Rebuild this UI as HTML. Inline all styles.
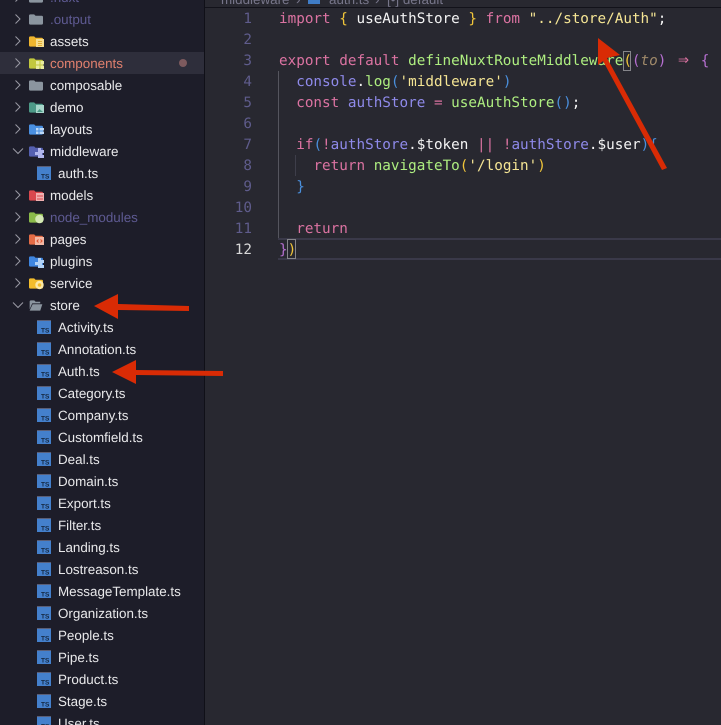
<!DOCTYPE html>
<html><head><meta charset="utf-8"><style>
html,body{margin:0;padding:0;background:#1d1d29;}
#p{position:relative;width:721px;height:725px;overflow:hidden;background:#1d1d29;font-family:"Liberation Sans",sans-serif;text-rendering:geometricPrecision;}
#side{position:absolute;left:0;top:0;width:204px;height:725px;background:#1d1d29;}
#ed{position:absolute;left:205px;top:0;width:516px;height:725px;background:#282830;}
#div{position:absolute;left:204px;top:0;width:1px;height:725px;background:#101018;}
.r{position:absolute;left:0;width:204px;height:22px;}
.r .t{position:absolute;top:0;line-height:22px;font-size:13.4px;color:#e8e8ea;white-space:nowrap;}
.r svg{position:absolute;}
.r svg.fd{left:29px;top:6px;width:14px;height:11px;}
.r svg.ch{left:13px;top:5px;width:10px;height:12px;}
.c{position:absolute;white-space:pre;font-family:"DejaVu Sans Mono",monospace;font-size:14.3px;line-height:21px;left:279px;color:#f4f4f4;margin-top:1px;}
.n{position:absolute;width:47px;left:205px;text-align:right;font-family:"DejaVu Sans Mono",monospace;font-size:14.3px;line-height:21px;color:#5f5c8c;margin-top:1px;}
.k{color:#dc73a2}.g{color:#aeee80}.y{color:#f0c53a}.s{color:#f5e594}.b{color:#4a8fdc}.v{color:#8f8aea}.m{color:#b66fd0}
.bc{position:absolute;top:-7px;font-size:13.4px;line-height:14px;color:#77768a;white-space:pre}
</style></head><body><div id="p">
<div id="side"></div><div id="ed"></div><div id="div"></div>
<div style="position:absolute;left:0;top:52px;width:204px;height:22px;background:#2e2e3b"></div>
<div style="position:absolute;left:205px;top:7px;width:516px;height:1px;background:#12121a"></div>
<div class="bc" style="left:221px">middleware</div>
<div class="bc" style="left:296px">›</div>
<div style="position:absolute;left:308px;top:-8px;width:12px;height:12px;background:#3f7cc6"></div>
<div class="bc" style="left:329px">auth.ts</div>
<div class="bc" style="left:375px">›</div>
<div class="bc" style="left:387px">[•] default</div>
<div style="position:absolute;left:179px;top:59px;width:8px;height:8px;border-radius:50%;background:#7d5a5e"></div>

<svg width="0" height="0" style="position:absolute">
<symbol id="cr" viewBox="0 0 10 12"><path d="M2.5 1.5L7 6L2.5 10.5" fill="none" stroke="#9a9aa4" stroke-width="1"/></symbol>
<symbol id="cd" viewBox="0 0 12 10"><path d="M1 2.5L6 7.5L11 2.5" fill="none" stroke="#9a9aa4" stroke-width="1"/></symbol>
<symbol id="fo" viewBox="0 0 15 13" preserveAspectRatio="none"><path d="M0 2Q0 .5 1.5 .5H5.5L7 2H13.5Q15 2 15 3.5V11Q15 12.5 13.5 12.5H1.5Q0 12.5 0 11Z"/></symbol>
<symbol id="ts" viewBox="0 0 14 14"><rect width="14" height="14" fill="#4480cc"/><rect x="0" y="0" width="14" height="1" fill="#5a5f78"/><text x="4" y="12.4" font-family="Liberation Sans" font-size="6.5" font-weight="bold" fill="#14263e">TS</text></symbol>
</svg>

<!-- folder rows -->
<div class="r" style="top:-14px"><svg class="ch"><use href="#cr"/></svg><svg class="fd" style="fill:#8b959f"><use href="#fo"/></svg><span class="t" style="left:50px;color:#5e5a92;top:1px">.nuxt</span></div>
<div class="r" style="top:8px"><svg class="ch"><use href="#cr"/></svg><svg class="fd" style="fill:#8b959f"><use href="#fo"/></svg><span class="t" style="left:50px;color:#5e5a92;top:1px">.output</span></div>
<div class="r" style="top:30px"><svg class="ch"><use href="#cr"/></svg><svg class="fd" style="fill:#efb52e"><use href="#fo"/></svg><svg style="left:36px;top:9px" width="8" height="8"><rect width="8" height="8" fill="#f6dd8f"/><path d="M2 2.5H6M2 4.5H6M2 6.5H6" stroke="#e2ae33"/></svg><span class="t" style="left:50px;top:1px">assets</span></div>
<div class="r" style="top:52px"><svg class="ch"><use href="#cr"/></svg><svg class="fd" style="fill:#c2c83e"><use href="#fo"/></svg><svg style="left:36px;top:9px" width="8" height="8"><path d="M0 0H3.500V3.500H0ZM4.500 0H8V3.500H4.500ZM0 4.500H3.500V8H0ZM4.500 4.500H8V8H4.500Z" fill="#e8eca0"/></svg><span class="t" style="left:50px;color:#e0806e;top:1px">components</span></div>
<div class="r" style="top:74px"><svg class="ch"><use href="#cr"/></svg><svg class="fd" style="fill:#8b959f"><use href="#fo"/></svg><span class="t" style="left:50px;top:1px">composable</span></div>
<div class="r" style="top:96px"><svg class="ch"><use href="#cr"/></svg><svg class="fd" style="fill:#4d9a88"><use href="#fo"/></svg><svg style="left:36px;top:9px" width="8" height="8"><rect width="8" height="8" fill="#a7d6ca"/><path d="M1 7L3.500 4L7 7Z" fill="#4d9a88"/></svg><span class="t" style="left:50px;top:1px">demo</span></div>
<div class="r" style="top:118px"><svg class="ch"><use href="#cr"/></svg><svg class="fd" style="fill:#4a90e2"><use href="#fo"/></svg><svg style="left:36px;top:9px" width="8" height="8"><path d="M0 1H2.500V3.500H0ZM3.500 1H8V3.500H3.500ZM0 4.500H2.500V7H0ZM3.500 4.500H8V7H3.500Z" fill="#bcd8f6"/></svg><span class="t" style="left:50px;top:1px">layouts</span></div>
<div class="r" style="top:140px"><svg style="left:12px;top:6px" width="12" height="10"><use href="#cd"/></svg><svg class="fd" style="fill:#5560b0"><use href="#fo"/></svg><svg style="left:35px;top:8px" width="9" height="10"><path d="M3 0H6V2H9V5H7V7H9V10H3V7H0V4H3Z" fill="#b1b6ec"/></svg><span class="t" style="left:50px;top:1px">middleware</span></div>
<div class="r" style="top:162px"><svg style="left:37px;top:4px" width="14" height="14"><use href="#ts"/></svg><span class="t" style="left:58px;top:1px">auth.ts</span></div>
<div class="r" style="top:184px"><svg class="ch"><use href="#cr"/></svg><svg class="fd" style="fill:#d9484e"><use href="#fo"/></svg><svg style="left:36px;top:9px" width="8" height="8"><rect width="8" height="8" fill="#f0b0b0"/><path d="M1 3H7M1 6H7" stroke="#d9484e"/></svg><span class="t" style="left:50px;top:1px">models</span></div>
<div class="r" style="top:206px"><svg class="ch"><use href="#cr"/></svg><svg class="fd" style="fill:#8bbb4a"><use href="#fo"/></svg><svg style="left:35px;top:8px" width="9" height="10"><circle cx="4.500" cy="5" r="4.300" fill="#d4e8b4"/></svg><span class="t" style="left:50px;color:#5e5a92;top:1px">node_modules</span></div>
<div class="r" style="top:228px"><svg class="ch"><use href="#cr"/></svg><svg class="fd" style="fill:#e56c46"><use href="#fo"/></svg><svg style="left:35px;top:9px" width="9" height="8"><rect width="9" height="8" fill="#f4b8a4"/><path d="M3.500 2.500L2 4L3.500 5.500M5.500 2.500L7 4L5.500 5.500" fill="none" stroke="#e0502c"/></svg><span class="t" style="left:50px;top:1px">pages</span></div>
<div class="r" style="top:250px"><svg class="ch"><use href="#cr"/></svg><svg class="fd" style="fill:#3f86e0"><use href="#fo"/></svg><svg style="left:35px;top:8px" width="9" height="10"><path d="M3 0H6V2H9V5H7V7H9V10H3V7H0V4H3Z" fill="#b2d2f6"/></svg><span class="t" style="left:50px;top:1px">plugins</span></div>
<div class="r" style="top:272px"><svg class="ch"><use href="#cr"/></svg><svg class="fd" style="fill:#f3bd2c"><use href="#fo"/></svg><svg style="left:35px;top:8px" width="9" height="10"><circle cx="4.500" cy="5" r="3" fill="none" stroke="#fbe9a8" stroke-width="2.400"/></svg><span class="t" style="left:50px;top:1px">service</span></div>
<div class="r" style="top:294px"><svg style="left:12px;top:6px" width="12" height="10"><use href="#cd"/></svg><svg style="left:29px;top:6px" width="14" height="11" viewBox="0 0 15 13"><path d="M0 2Q0 .5 1.500 .5H5.500L7 2H12.500V4H3L0 11Z" fill="#8b959f"/><path d="M3.500 5H15L12.500 12.500H0Z" fill="#8b959f"/></svg><span class="t" style="left:50px;top:1px">store</span></div>

<!-- ts files -->
<div class="r" style="top:316px"><svg style="left:37px;top:4px" width="14" height="14"><use href="#ts"/></svg><span class="t" style="left:58px;top:1px">Activity.ts</span></div>
<div class="r" style="top:338px"><svg style="left:37px;top:4px" width="14" height="14"><use href="#ts"/></svg><span class="t" style="left:58px;top:1px">Annotation.ts</span></div>
<div class="r" style="top:360px"><svg style="left:37px;top:4px" width="14" height="14"><use href="#ts"/></svg><span class="t" style="left:58px;top:1px">Auth.ts</span></div>
<div class="r" style="top:382px"><svg style="left:37px;top:4px" width="14" height="14"><use href="#ts"/></svg><span class="t" style="left:58px;top:1px">Category.ts</span></div>
<div class="r" style="top:404px"><svg style="left:37px;top:4px" width="14" height="14"><use href="#ts"/></svg><span class="t" style="left:58px;top:1px">Company.ts</span></div>
<div class="r" style="top:426px"><svg style="left:37px;top:4px" width="14" height="14"><use href="#ts"/></svg><span class="t" style="left:58px;top:1px">Customfield.ts</span></div>
<div class="r" style="top:448px"><svg style="left:37px;top:4px" width="14" height="14"><use href="#ts"/></svg><span class="t" style="left:58px;top:1px">Deal.ts</span></div>
<div class="r" style="top:470px"><svg style="left:37px;top:4px" width="14" height="14"><use href="#ts"/></svg><span class="t" style="left:58px;top:1px">Domain.ts</span></div>
<div class="r" style="top:492px"><svg style="left:37px;top:4px" width="14" height="14"><use href="#ts"/></svg><span class="t" style="left:58px;top:1px">Export.ts</span></div>
<div class="r" style="top:514px"><svg style="left:37px;top:4px" width="14" height="14"><use href="#ts"/></svg><span class="t" style="left:58px;top:1px">Filter.ts</span></div>
<div class="r" style="top:536px"><svg style="left:37px;top:4px" width="14" height="14"><use href="#ts"/></svg><span class="t" style="left:58px;top:1px">Landing.ts</span></div>
<div class="r" style="top:558px"><svg style="left:37px;top:4px" width="14" height="14"><use href="#ts"/></svg><span class="t" style="left:58px;top:1px">Lostreason.ts</span></div>
<div class="r" style="top:580px"><svg style="left:37px;top:4px" width="14" height="14"><use href="#ts"/></svg><span class="t" style="left:58px;top:1px">MessageTemplate.ts</span></div>
<div class="r" style="top:602px"><svg style="left:37px;top:4px" width="14" height="14"><use href="#ts"/></svg><span class="t" style="left:58px;top:1px">Organization.ts</span></div>
<div class="r" style="top:624px"><svg style="left:37px;top:4px" width="14" height="14"><use href="#ts"/></svg><span class="t" style="left:58px;top:1px">People.ts</span></div>
<div class="r" style="top:646px"><svg style="left:37px;top:4px" width="14" height="14"><use href="#ts"/></svg><span class="t" style="left:58px;top:1px">Pipe.ts</span></div>
<div class="r" style="top:668px"><svg style="left:37px;top:4px" width="14" height="14"><use href="#ts"/></svg><span class="t" style="left:58px;top:1px">Product.ts</span></div>
<div class="r" style="top:690px"><svg style="left:37px;top:4px" width="14" height="14"><use href="#ts"/></svg><span class="t" style="left:58px;top:1px">Stage.ts</span></div>
<div class="r" style="top:712px"><svg style="left:37px;top:4px" width="14" height="14"><use href="#ts"/></svg><span class="t" style="left:58px;top:1px">User.ts</span></div>

<!-- editor decorations -->
<div style="position:absolute;left:278px;top:71px;width:1px;height:168px;background:#55555e"></div>
<div style="position:absolute;left:295px;top:155px;width:1px;height:21px;background:#3e3e4a"></div>
<div style="position:absolute;left:278px;top:238px;width:443px;height:18px;border-top:2px solid #3a3949;border-bottom:2px solid #3a3949"></div>
<div style="position:absolute;left:287px;top:239px;width:9px;height:20px;border:1px solid #85858a;box-sizing:border-box"></div>
<div style="position:absolute;left:623px;top:51px;width:8px;height:20px;border:1px solid #85858a;box-sizing:border-box"></div>

<!-- line numbers -->
<div class="n" style="top:8px">1</div><div class="n" style="top:29px">2</div><div class="n" style="top:50px">3</div><div class="n" style="top:71px">4</div><div class="n" style="top:92px">5</div><div class="n" style="top:113px">6</div><div class="n" style="top:134px">7</div><div class="n" style="top:155px">8</div><div class="n" style="top:176px">9</div><div class="n" style="top:197px">10</div><div class="n" style="top:218px">11</div><div class="n" style="top:239px;color:#d8d8d8">12</div>

<!-- code -->
<div class="c" style="top:8px"><span class="k">import</span> <span class="y">{</span> useAuthStore <span class="y">}</span> <span class="k">from</span> <span class="s">"../store/Auth"</span>;</div>
<div class="c" style="top:50px"><span class="k">export default</span> <span class="g">defineNuxtRouteMiddleware</span><span class="y">(</span><span class="m">(</span><span style="color:#a08a6a;font-style:italic">to</span><span class="m">)</span> <span class="k" style="display:inline-block;width:17.2px;text-align:center;line-height:14px;font-size:18px">⇒</span> <span class="m">{</span></div>
<div class="c" style="top:71px">  <span class="v">console</span>.<span class="g">log</span><span class="b">(</span><span class="s">'middleware'</span><span class="b">)</span></div>
<div class="c" style="top:92px">  <span class="k">const</span> <span class="v">authStore</span> <span class="k">=</span> <span class="g">useAuthStore</span><span class="b">()</span>;</div>
<div class="c" style="top:134px">  <span class="k">if</span><span class="b">(</span><span class="k">!</span><span class="v">authStore</span>.$token <span class="k">||</span> <span class="k">!</span><span class="v">authStore</span>.$user<span class="b">){</span></div>
<div class="c" style="top:155px">    <span class="k">return</span> <span class="g">navigateTo</span><span class="y">(</span><span class="s">'/login'</span><span class="y">)</span></div>
<div class="c" style="top:176px">  <span class="b">}</span></div>
<div class="c" style="top:218px">  <span class="k">return</span></div>
<div class="c" style="top:239px"><span class="m">}</span><span class="y">)</span></div>

<!-- red arrows -->
<svg style="position:absolute;left:0;top:0" width="721" height="725">
<path d="M94 306L118 294L118 304L189 306L189 311L118 310L118 319Z" fill="#d92b05"/>
<path d="M112 372L136 360L136 370L223 371L223 376L136 375L136 384Z" fill="#d92b05"/>
<path d="M598 38L620 55L607 58L667 168L662 170L603 61L598 65Z" fill="#d92b05"/>
</svg>
</div></body></html>
